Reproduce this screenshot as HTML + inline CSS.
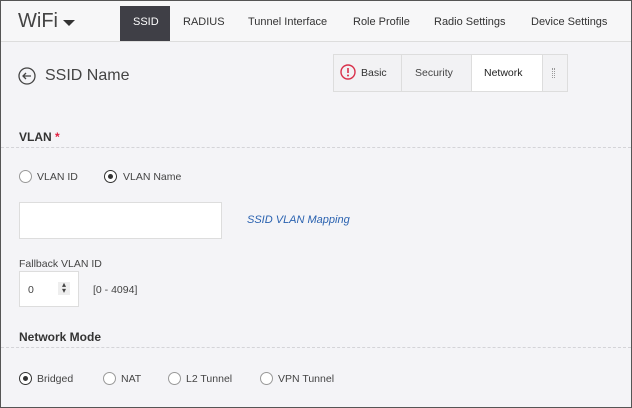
<!DOCTYPE html>
<html><head><style>
body{margin:0;width:632px;height:408px;overflow:hidden;font-family:"Liberation Sans",sans-serif;}
.frame{position:absolute;left:0;top:0;width:630px;height:406px;border:1px solid #555;background:#f4f4f7;}
.hdr{position:absolute;left:0;top:0;width:630px;height:40px;background:#f7f7f8;border-bottom:1px solid #ddd;}
.t{position:absolute;font-size:11px;color:#333;top:15px;}
.abs{position:absolute;}
.radio{position:absolute;width:11px;height:11px;border:1px solid #999;border-radius:50%;background:#fff;}
.radio.on{border-color:#333;}
.radio.on:after{content:"";position:absolute;left:3px;top:3px;width:5px;height:5px;border-radius:50%;background:#333;}
.lbl{position:absolute;font-size:10.5px;color:#444;}
.dash{position:absolute;left:0;width:630px;border-top:1px dashed #d4d4d8;}
</style></head><body>
<div class="frame">
<div class="hdr">
<div class="abs" style="left:17px;top:9px;font-size:20px;color:#444;">WiFi</div>
<div class="abs" style="left:62px;top:19px;width:0;height:0;border-left:6px solid transparent;border-right:6px solid transparent;border-top:6px solid #333;"></div>
<div class="abs" style="left:119px;top:5px;width:50px;height:35px;background:#3f3f46;"></div>
<div class="t" style="left:132px;color:#fff;">SSID</div>
<div class="t" style="left:182px;">RADIUS</div>
<div class="t" style="left:247px;">Tunnel Interface</div>
<div class="t" style="left:352px;">Role Profile</div>
<div class="t" style="left:433px;">Radio Settings</div>
<div class="t" style="left:530px;">Device Settings</div>
</div>
<svg class="abs" style="left:17px;top:66px" width="18" height="18" viewBox="0 0 18 18"><circle cx="9" cy="9" r="8" fill="none" stroke="#444" stroke-width="1.3"/><path d="M13 9H5M8 6L5 9L8 12" fill="none" stroke="#444" stroke-width="1.3"/></svg>
<div class="abs" style="left:44px;top:66px;font-size:16px;color:#444;">SSID Name</div>
<div class="abs" style="left:332px;top:53px;width:233px;height:36px;border:1px solid #ddd;background:#f2f2f4;"></div>
<div class="abs" style="left:400px;top:54px;width:1px;height:36px;background:#ddd;"></div>
<div class="abs" style="left:470px;top:54px;width:70px;height:36px;background:#fff;border-left:1px solid #ddd;border-right:1px solid #ddd;"></div>
<svg class="abs" style="left:339px;top:63px" width="16" height="16" viewBox="0 0 16 16"><circle cx="8" cy="8" r="7" fill="none" stroke="#d9304a" stroke-width="1.4"/><path d="M8 4v5" stroke="#d9304a" stroke-width="1.6"/><circle cx="8" cy="11.5" r="1" fill="#d9304a"/></svg>
<div class="lbl" style="left:360px;top:66px;color:#333;">Basic</div>
<div class="lbl" style="left:414px;top:66px;">Security</div>
<div class="lbl" style="left:483px;top:66px;color:#222;">Network</div>
<div class="abs" style="left:551px;top:67px;height:10px;border-left:1px dotted #999;border-right:1px dotted #999;width:1px;"></div>
<div class="abs" style="left:18px;top:129px;font-size:12px;font-weight:bold;color:#333;">VLAN <span style="color:#e02040">*</span></div>
<div class="dash" style="top:146px"></div>
<div class="radio" style="left:18px;top:169px"></div><div class="lbl" style="left:36px;top:170px;">VLAN ID</div>
<div class="radio on" style="left:103px;top:169px"></div><div class="lbl" style="left:122px;top:170px;">VLAN Name</div>
<div class="abs" style="left:18px;top:201px;width:201px;height:35px;background:#fff;border:1px solid #ddd;"></div>
<div class="abs" style="left:246px;top:213px;font-size:11px;font-style:italic;color:#2a62b0;">SSID VLAN Mapping</div>
<div class="lbl" style="left:18px;top:257px;">Fallback VLAN ID</div>
<div class="abs" style="left:18px;top:270px;width:58px;height:34px;background:#fff;border:1px solid #ddd;"></div>
<div class="lbl" style="left:27px;top:283px;">0</div>
<div class="abs" style="left:57px;top:281px;width:12px;height:13px;background:#eee;font-size:8px;color:#444;text-align:center;line-height:6px;">▴<br>▾</div>
<div class="lbl" style="left:92px;top:283px;">[0 - 4094]</div>
<div class="abs" style="left:18px;top:329px;font-size:12px;font-weight:bold;color:#333;">Network Mode</div>
<div class="dash" style="top:346px"></div>
<div class="radio on" style="left:18px;top:371px"></div><div class="lbl" style="left:36px;top:372px;">Bridged</div>
<div class="radio" style="left:102px;top:371px"></div><div class="lbl" style="left:120px;top:372px;">NAT</div>
<div class="radio" style="left:167px;top:371px"></div><div class="lbl" style="left:185px;top:372px;">L2 Tunnel</div>
<div class="radio" style="left:259px;top:371px"></div><div class="lbl" style="left:277px;top:372px;">VPN Tunnel</div>
</div>
</body></html>
